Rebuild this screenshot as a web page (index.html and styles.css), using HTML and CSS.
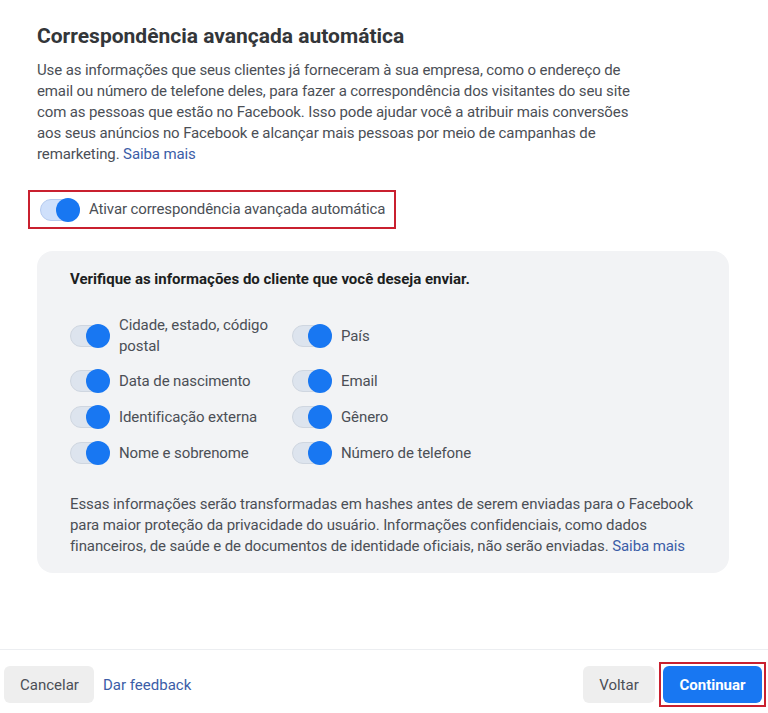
FILE: index.html
```html
<!DOCTYPE html>
<html lang="pt-BR">
<head>
<meta charset="utf-8">
<title>Correspondência avançada automática</title>
<link rel="stylesheet" href="styles.css">
</head>
<body>
<main class="content">
  <h1 class="title">Correspondência avançada automática</h1>
  <p class="intro">Use as informações que seus clientes já forneceram à sua empresa, como o endereço de email ou número de telefone deles, para fazer a correspondência dos visitantes do seu site com as pessoas que estão no Facebook. Isso pode ajudar você a atribuir mais conversões aos seus anúncios no Facebook e alcançar mais pessoas por meio de campanhas de remarketing. <a class="link" href="#">Saiba mais</a></p>

  <div class="highlight main-toggle">
    <span class="switch switch-main"><span class="knob"></span></span>
    <span class="main-label">Ativar correspondência avançada automática</span>
  </div>

  <section class="panel">
    <h2 class="panel-title">Verifique as informações do cliente que você deseja enviar.</h2>
    <div class="grid">
      <div class="item"><span class="switch"><span class="knob"></span></span><span class="item-label">Cidade, estado, código postal</span></div>
      <div class="item"><span class="switch"><span class="knob"></span></span><span class="item-label">País</span></div>
      <div class="item"><span class="switch"><span class="knob"></span></span><span class="item-label">Data de nascimento</span></div>
      <div class="item"><span class="switch"><span class="knob"></span></span><span class="item-label">Email</span></div>
      <div class="item"><span class="switch"><span class="knob"></span></span><span class="item-label">Identificação externa</span></div>
      <div class="item"><span class="switch"><span class="knob"></span></span><span class="item-label">Gênero</span></div>
      <div class="item"><span class="switch"><span class="knob"></span></span><span class="item-label">Nome e sobrenome</span></div>
      <div class="item"><span class="switch"><span class="knob"></span></span><span class="item-label">Número de telefone</span></div>
    </div>
    <p class="note">Essas informações serão transformadas em hashes antes de serem enviadas para o Facebook para maior proteção da privacidade do usuário. Informações confidenciais, como dados financeiros, de saúde e de documentos de identidade oficiais, não serão enviadas. <a class="link" href="#">Saiba mais</a></p>
  </section>
</main>

<footer class="footer">
  <div class="footer-left">
    <button class="btn btn-gray" type="button">Cancelar</button>
    <a class="link feedback" href="#">Dar feedback</a>
  </div>
  <div class="footer-right">
    <button class="btn btn-gray btn-back" type="button">Voltar</button>
    <span class="highlight btn-frame"><button class="btn btn-primary" type="button">Continuar</button></span>
  </div>
</footer>
</body>
</html>
```

FILE: styles.css
```css
* { box-sizing: border-box; }

html, body {
  margin: 0;
  padding: 0;
  background: #ffffff;
}

body {
  width: 768px;
  height: 713px;
  display: flex;
  flex-direction: column;
  font-family: Roboto, "Liberation Sans", Arial, sans-serif;
  color: #4b4f56;
  overflow: hidden;
}

.content {
  flex: 1;
  padding: 24px 0 0 37px;
}

.title {
  margin: 0 0 12px;
  font-size: 21px;
  line-height: 24px;
  font-weight: 700;
  color: #333639;
}

.intro {
  margin: 0;
  width: 604px;
  font-size: 15px;
  line-height: 21px;
  letter-spacing: -0.12px;
  color: #4b4f56;
}

.link {
  color: #3b5da7;
  text-decoration: none;
}

.highlight {
  border: 2px solid #c9202f;
}

.main-toggle {
  display: inline-flex;
  align-items: center;
  gap: 9px;
  margin: 25px 0 0 -9px;
  height: 39px;
  padding: 0 9px 0 10px;
}

.main-label {
  font-size: 15px;
  line-height: 21px;
  letter-spacing: -0.12px;
  color: #4b4f56;
}

.switch {
  position: relative;
  flex: none;
  width: 40px;
  height: 22px;
  border-radius: 11px;
  background: #dde4ee;
  border: 1px solid #cfd6e0;
}

.switch-main {
  background: #cfe0fb;
  border-color: #b6cbef;
}

.knob {
  position: absolute;
  right: -1px;
  top: -2px;
  width: 24px;
  height: 24px;
  border-radius: 50%;
  background: #1877f2;
}

.panel {
  margin-top: 22px;
  width: 692px;
  height: 322px;
  border-radius: 16px;
  background: #f2f3f5;
  padding: 18px 33px 0;
}

.panel-title {
  margin: 0;
  font-size: 15px;
  line-height: 20px;
  font-weight: 700;
  color: #1c1e21;
}

.grid {
  margin-top: 26px;
  display: grid;
  grid-template-columns: 222px 1fr;
  row-gap: 12px;
}

.item {
  display: flex;
  align-items: center;
  gap: 9px;
  min-height: 24px;
}

.item-label {
  font-size: 15px;
  line-height: 21px;
  letter-spacing: -0.1px;
  color: #4b4f56;
}

.note {
  margin: 29px 0 0;
  font-size: 15px;
  line-height: 21px;
  color: #4b4f56;
  letter-spacing: -0.1px;
}

.footer {
  flex: none;
  height: 64px;
  border-top: 1px solid #eceef1;
  display: flex;
  justify-content: space-between;
  align-items: center;
  padding: 6px 2px 0 4px;
}

.footer-left,
.footer-right {
  display: flex;
  align-items: center;
}

.btn {
  font-family: inherit;
  font-size: 15px;
  border: none;
  border-radius: 6px;
  height: 37px;
  padding: 0 16px;
  cursor: pointer;
}

.btn-gray {
  background: #eeeeee;
  color: #4b4f56;
  width: 90px;
}

.feedback {
  margin-left: 9px;
  font-size: 15px;
}

.btn-back {
  width: 72px;
  margin-right: 4px;
}

.btn-frame {
  display: inline-flex;
  padding: 2px;
}

.btn-primary {
  width: 99px;
  height: 37px;
  background: #1877f2;
  color: #ffffff;
  font-weight: 700;
}
```
